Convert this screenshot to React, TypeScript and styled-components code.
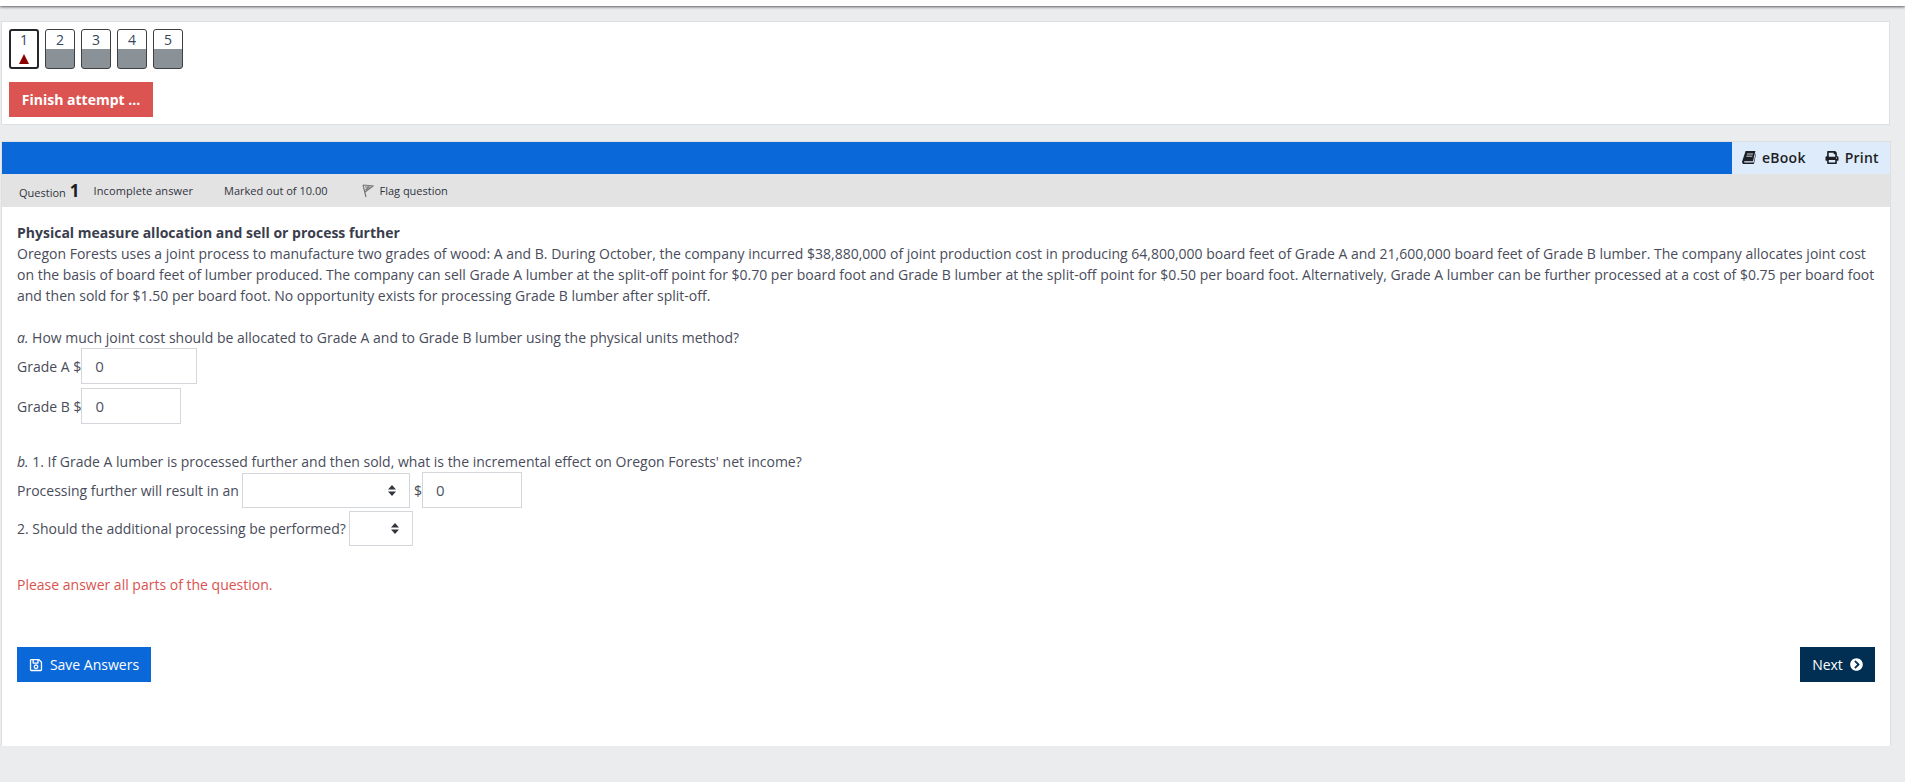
import React from 'react';
import styled, { createGlobalStyle } from 'styled-components';
import { FaChevronCircleRight, FaPrint, FaRegSave } from 'react-icons/fa';

const GlobalStyle = createGlobalStyle`
  html, body {
    margin: 0;
    padding: 0;
    background: #ebecee;
    font-family: "Open Sans", "Liberation Sans", sans-serif;
    font-size: 14px;
    color: #494c5a;
    overflow: hidden;
  }
`;

const TopBar = styled.div`
  height: 6px;
  background: #fff;
  box-shadow: 0 1px 3px #55585c;
`;

const Page = styled.div`
  width: 1888px;
  margin-left: 2px;
  padding-top: 15px;
`;

const NavCard = styled.section`
  height: 104px;
  box-sizing: border-box;
  background: #fff;
  border: 1px solid #dedfe1;
  margin-left: -1px;
  padding: 7px 0 0 7px;
`;

const NavRow = styled.div`
  display: flex;
  gap: 6px;
`;

const NavButton = styled.div<{ $current?: boolean }>`
  width: 30px;
  height: 40px;
  box-sizing: border-box;
  border: ${p => (p.$current ? '2px solid #23272b' : '1px solid #3c4043')};
  border-radius: 3px;
  background: ${p => (p.$current ? '#fff' : 'linear-gradient(#fff 0, #fff 19px, #8a9197 19px)')};
  position: relative;
  text-align: center;
  font-size: 14px;
  line-height: ${p => (p.$current ? '17px' : '19px')};
  color: #33475b;
`;

const Flagged = styled.span`
  position: absolute;
  left: 8px;
  bottom: 3px;
  width: 0;
  height: 0;
  border-left: 5px solid transparent;
  border-right: 5px solid transparent;
  border-bottom: 10px solid #8b0000;
`;

const FinishButton = styled.div`
  width: 144px;
  height: 35px;
  margin-top: 13px;
  background: #db5451;
  color: #fff;
  font-weight: 700;
  font-size: 14px;
  line-height: 35px;
  text-align: center;
`;

const QuestionCard = styled.section`
  margin-top: 17px;
  height: 604px;
  box-sizing: border-box;
  background: #fff;
  box-shadow: 0 0 0 1px #dedfe1;
  display: flex;
  flex-direction: column;
`;

const BlueBar = styled.div`
  height: 32px;
  background: #0a68d9;
  display: flex;
  justify-content: flex-end;
`;

const ToolBox = styled.div`
  width: 158px;
  box-sizing: border-box;
  background: #deebfb;
  display: flex;
  align-items: center;
  gap: 19px;
  padding: 0 0 2px 10px;
  color: #1d1f24;
  font-weight: 600;
  font-size: 14px;
  letter-spacing: 0.25px;
`;

const Tool = styled.span`
  display: flex;
  align-items: center;
  gap: 6px;
  svg {
    width: 14px;
    height: 13px;
  }
`;

const InfoBar = styled.div`
  height: 33px;
  background: #e3e3e3;
  display: flex;
  align-items: center;
  padding-left: 17px;
  font-size: 11px;
  color: #2f3440;
`;

const QuestionNo = styled.span`
  display: flex;
  align-items: baseline;
  gap: 4px;
  margin-right: 14px;
  b {
    font-size: 17px;
    line-height: 20px;
    color: #1b1d22;
  }
`;

const State = styled.span`
  margin-right: 31px;
  letter-spacing: 0.1px;
`;

const Marks = styled.span`
  margin-right: 35px;
`;

const FlagToggle = styled.span`
  display: flex;
  align-items: center;
  gap: 5px;
`;

const Body = styled.div`
  flex: 1;
  padding: 15px 13px 0 15px;
  line-height: 21px;
  display: flex;
  flex-direction: column;
`;

const Title = styled.div`
  font-weight: 700;
  color: #3a3d4d;
`;

const Part = styled.div<{ $top: number }>`
  margin-top: ${p => p.$top}px;
`;

const FieldRow = styled.div<{ $top?: number }>`
  display: flex;
  align-items: center;
  gap: 3px;
  margin-top: ${p => p.$top ?? 0}px;
`;

const Money = styled.span`
  display: flex;
  align-items: center;
`;

const TextBox = styled.div<{ $w: number }>`
  width: ${p => p.$w}px;
  height: 36px;
  box-sizing: border-box;
  border: 1px solid #d3d7dc;
  padding-left: 13px;
  font-size: 15px;
  line-height: 34px;
  color: #50535f;
`;

const SelectBox = styled.div<{ $w: number; $right?: number }>`
  width: ${p => p.$w}px;
  height: 35px;
  box-sizing: border-box;
  border: 1px solid #d3d7dc;
  margin-right: ${p => p.$right ?? 0}px;
  display: flex;
  align-items: center;
  justify-content: flex-end;
  padding-right: 13px;
`;

const Warning = styled.div`
  margin-top: 28px;
  color: #d9534f;
`;

const ButtonRow = styled.div`
  margin-top: 52px;
  display: flex;
  justify-content: space-between;
  padding-right: 2px;
`;

const ActionButton = styled.div<{ $bg: string; $w: number }>`
  width: ${p => p.$w}px;
  height: 35px;
  background: ${p => p.$bg};
  color: #fff;
  display: flex;
  align-items: center;
  justify-content: center;
  gap: 7px;
  font-size: 14px;
`;

const Sorter = () => (
  <svg width="8" height="11" viewBox="0 0 8 11">
    <path d="M4 0 8 4.4H0ZM0 6.6H8L4 11Z" fill="#33353d" />
  </svg>
);

const Pennant = () => (
  <svg width="12" height="14" viewBox="0 0 12 14" fill="none" stroke="#777" strokeWidth="1.2">
    <path d="M1 1 4 13M1 1 11 2 3 8M3 3 7 3 3.5 6" />
  </svg>
);

// slanted book, the font-awesome 4 one is not in the packages
const SlantedBook = () => (
  <svg viewBox="0 0 14 13">
    <path
      d="M3.6 0H13.4L11 10.3H2.8C1.9 10.3 1.8 11.5 2.6 11.5H11.6L13.7 2.6 14 3.2 11.9 13H2C.6 13-.2 11.6.2 10.2Z"
      fill="#1d1f24"
    />
    <path d="M5 3H11M4.4 5.2H10.4" stroke="#deebfb" strokeWidth="0.9" />
  </svg>
);

export default function App() {
  return (
    <>
      <GlobalStyle />
      <TopBar />
      <Page>
        <NavCard>
          <NavRow>
            <NavButton $current>
              1
              <Flagged />
            </NavButton>
            {[2, 3, 4, 5].map(n => (
              <NavButton key={n}>{n}</NavButton>
            ))}
          </NavRow>
          <FinishButton>Finish attempt ...</FinishButton>
        </NavCard>

        <QuestionCard>
          <BlueBar>
            <ToolBox>
              <Tool>
                <SlantedBook />
                eBook
              </Tool>
              <Tool>
                <FaPrint />
                Print
              </Tool>
            </ToolBox>
          </BlueBar>
          <InfoBar>
            <QuestionNo>
              Question <b>1</b>
            </QuestionNo>
            <State>Incomplete answer</State>
            <Marks>Marked out of 10.00</Marks>
            <FlagToggle>
              <Pennant />
              Flag question
            </FlagToggle>
          </InfoBar>
          <Body>
            <Title>Physical measure allocation and sell or process further</Title>
            <div>
              Oregon Forests uses a joint process to manufacture two grades of wood: A and B. During October, the
              company incurred $38,880,000 of joint production cost in producing 64,800,000 board feet of Grade A and
              21,600,000 board feet of Grade B lumber. The company allocates joint cost on the basis of board feet of
              lumber produced. The company can sell Grade A lumber at the split-off point for $0.70 per board foot and
              Grade B lumber at the split-off point for $0.50 per board foot. Alternatively, Grade A lumber can be
              further processed at a cost of $0.75 per board foot and then sold for $1.50 per board foot. No
              opportunity exists for processing Grade B lumber after split-off.
            </div>
            <Part $top={21}>
              <i>a.</i> How much joint cost should be allocated to Grade A and to Grade B lumber using the physical
              units method?
            </Part>
            <Money>
              Grade A $<TextBox $w={116}>0</TextBox>
            </Money>
            <FieldRow $top={4}>
              <Money>
                Grade B $<TextBox $w={100}>0</TextBox>
              </Money>
            </FieldRow>
            <Part $top={27}>
              <i>b.</i> 1. If Grade A lumber is processed further and then sold, what is the incremental effect on
              Oregon Forests' net income?
            </Part>
            <FieldRow>
              Processing further will result in an
              <SelectBox $w={168} $right={1}>
                <Sorter />
              </SelectBox>
              <Money>
                $<TextBox $w={100}>0</TextBox>
              </Money>
            </FieldRow>
            <FieldRow $top={3}>
              2. Should the additional processing be performed?
              <SelectBox $w={64}>
                <Sorter />
              </SelectBox>
            </FieldRow>
            <Warning>Please answer all parts of the question.</Warning>
            <ButtonRow>
              <ActionButton $bg="#0a68d9" $w={134}>
                <FaRegSave size={14} />
                Save Answers
              </ActionButton>
              <ActionButton $bg="#012f54" $w={75}>
                Next
                <FaChevronCircleRight size={13} />
              </ActionButton>
            </ButtonRow>
          </Body>
        </QuestionCard>
      </Page>
    </>
  );
}
